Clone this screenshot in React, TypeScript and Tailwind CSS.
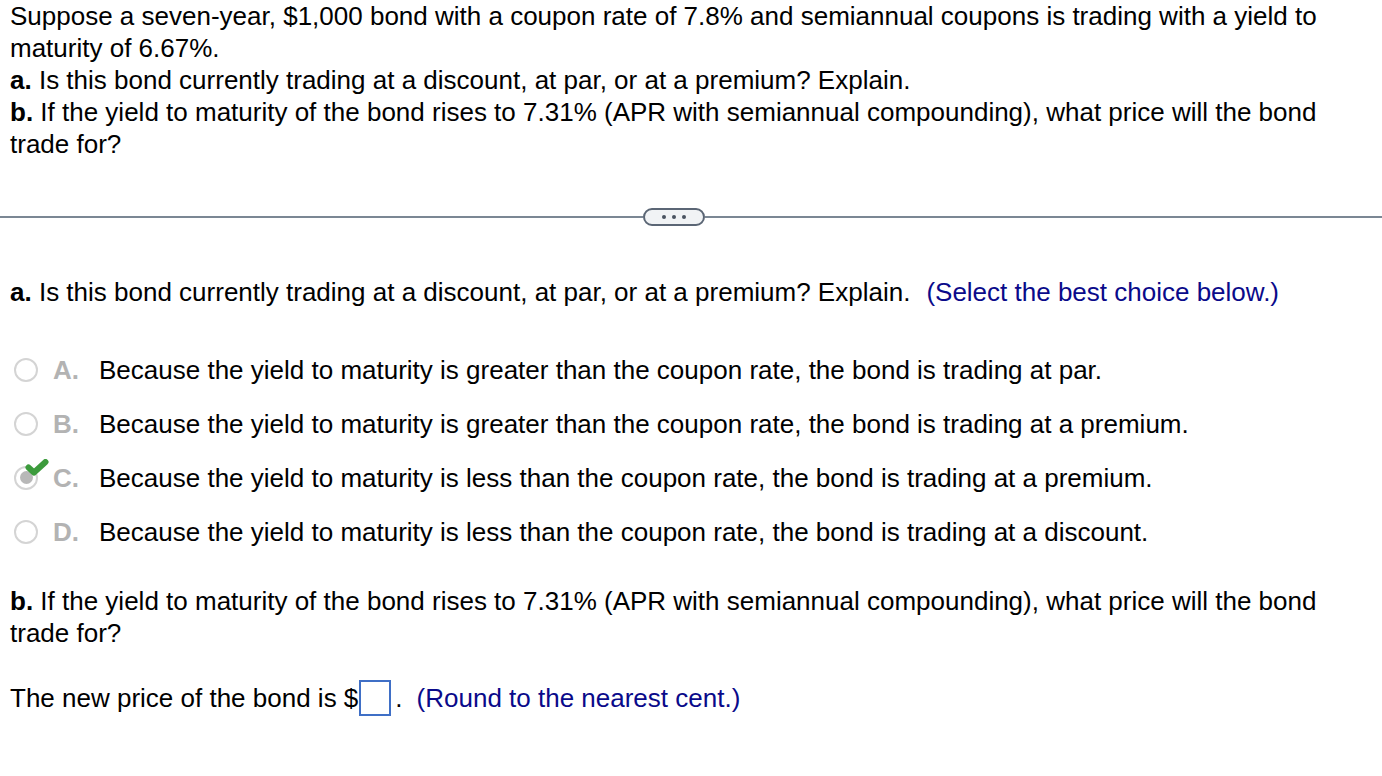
import React from 'react';

const options = [
  { key: 'A', text: 'Because the yield to maturity is greater than the coupon rate, the bond is trading at par.' },
  { key: 'B', text: 'Because the yield to maturity is greater than the coupon rate, the bond is trading at a premium.' },
  { key: 'C', text: 'Because the yield to maturity is less than the coupon rate, the bond is trading at a premium.', selected: true },
  { key: 'D', text: 'Because the yield to maturity is less than the coupon rate, the bond is trading at a discount.' },
];

function Radio({ selected }: { selected?: boolean }) {
  return (
    <div className="relative w-[26px] h-[26px] shrink-0">
      <div className="w-[24px] h-[24px] mt-[1px] rounded-full border-2 border-[#d4d4d4] bg-white flex items-center justify-center">
        {selected && <div className="w-[13px] h-[13px] rounded-full bg-[#b8b8b8]" />}
      </div>
      {selected && (
        <svg className="absolute left-[11px] -top-[7px]" width="24" height="18" viewBox="0 0 24 18">
          <path d="M3.5 8.5 L9 13.5 L20.5 3" fill="none" stroke="#3c9b3c" strokeWidth="6" strokeLinecap="round" strokeLinejoin="round" />
        </svg>
      )}
    </div>
  );
}

export default function App() {
  return (
    <div className="w-[1382px] h-[776px] bg-white text-black text-[26px] leading-[32px] overflow-hidden" style={{ fontFamily: '"Liberation Sans", Arial, sans-serif' }}>
      <div className="pl-[10px] pr-[20px]">
        <p>
          Suppose a seven-year, $1,000 bond with a coupon rate of 7.8% and semiannual coupons is trading with a yield to maturity of 6.67%.
        </p>
        <p><b>a.</b> Is this bond currently trading at a discount, at par, or at a premium? Explain.</p>
        <p><b>b.</b> If the yield to maturity of the bond rises to 7.31% (APR with semiannual compounding), what price will the bond trade for?</p>
      </div>

      {/* divider */}
      <div className="mt-[48px] flex items-center">
        <div className="w-[643px] h-[2px] bg-[#7b8794]" />
        <div className="w-[62px] h-[18px] rounded-full border-2 border-[#5b6675] bg-[#f1f3f5] flex items-center justify-center gap-[6px]">
          <span className="w-[4px] h-[4px] rounded-full bg-[#4a5360]" />
          <span className="w-[4px] h-[4px] rounded-full bg-[#4a5360]" />
          <span className="w-[4px] h-[4px] rounded-full bg-[#4a5360]" />
        </div>
        <div className="flex-1 h-[2px] bg-[#7b8794]" />
      </div>

      <div className="pl-[10px] pr-[20px]">
        <p className="mt-[50px]">
          <b>a.</b> Is this bond currently trading at a discount, at par, or at a premium? Explain.
          <span className="text-[#0a0a8a] ml-[16px]">(Select the best choice below.)</span>
        </p>

        <div className="mt-[46px] flex flex-col gap-[22px]">
          {options.map((o) => (
            <div key={o.key} className="flex items-center h-[32px]">
              <div className="ml-[4px]"><Radio selected={o.selected} /></div>
              <span className="ml-[13px] w-[46px] font-bold text-[#b3b3b3]">{o.key}.</span>
              <span>{o.text}</span>
            </div>
          ))}
        </div>

        <p className="mt-[37px]">
          <b>b.</b> If the yield to maturity of the bond rises to 7.31% (APR with semiannual compounding), what price will the bond trade for?
        </p>

        <div className="mt-[31px] flex items-center h-[36px]">
          <span>The new price of the bond is $</span>
          <span className="inline-block w-[32px] h-[36px] border-2 border-[#3f6fc6] ml-[1px]" />
          <span className="ml-[4px]">.</span>
          <span className="ml-[14px] text-[#0a0a8a]">(Round to the nearest cent.)</span>
        </div>
      </div>
    </div>
  );
}
